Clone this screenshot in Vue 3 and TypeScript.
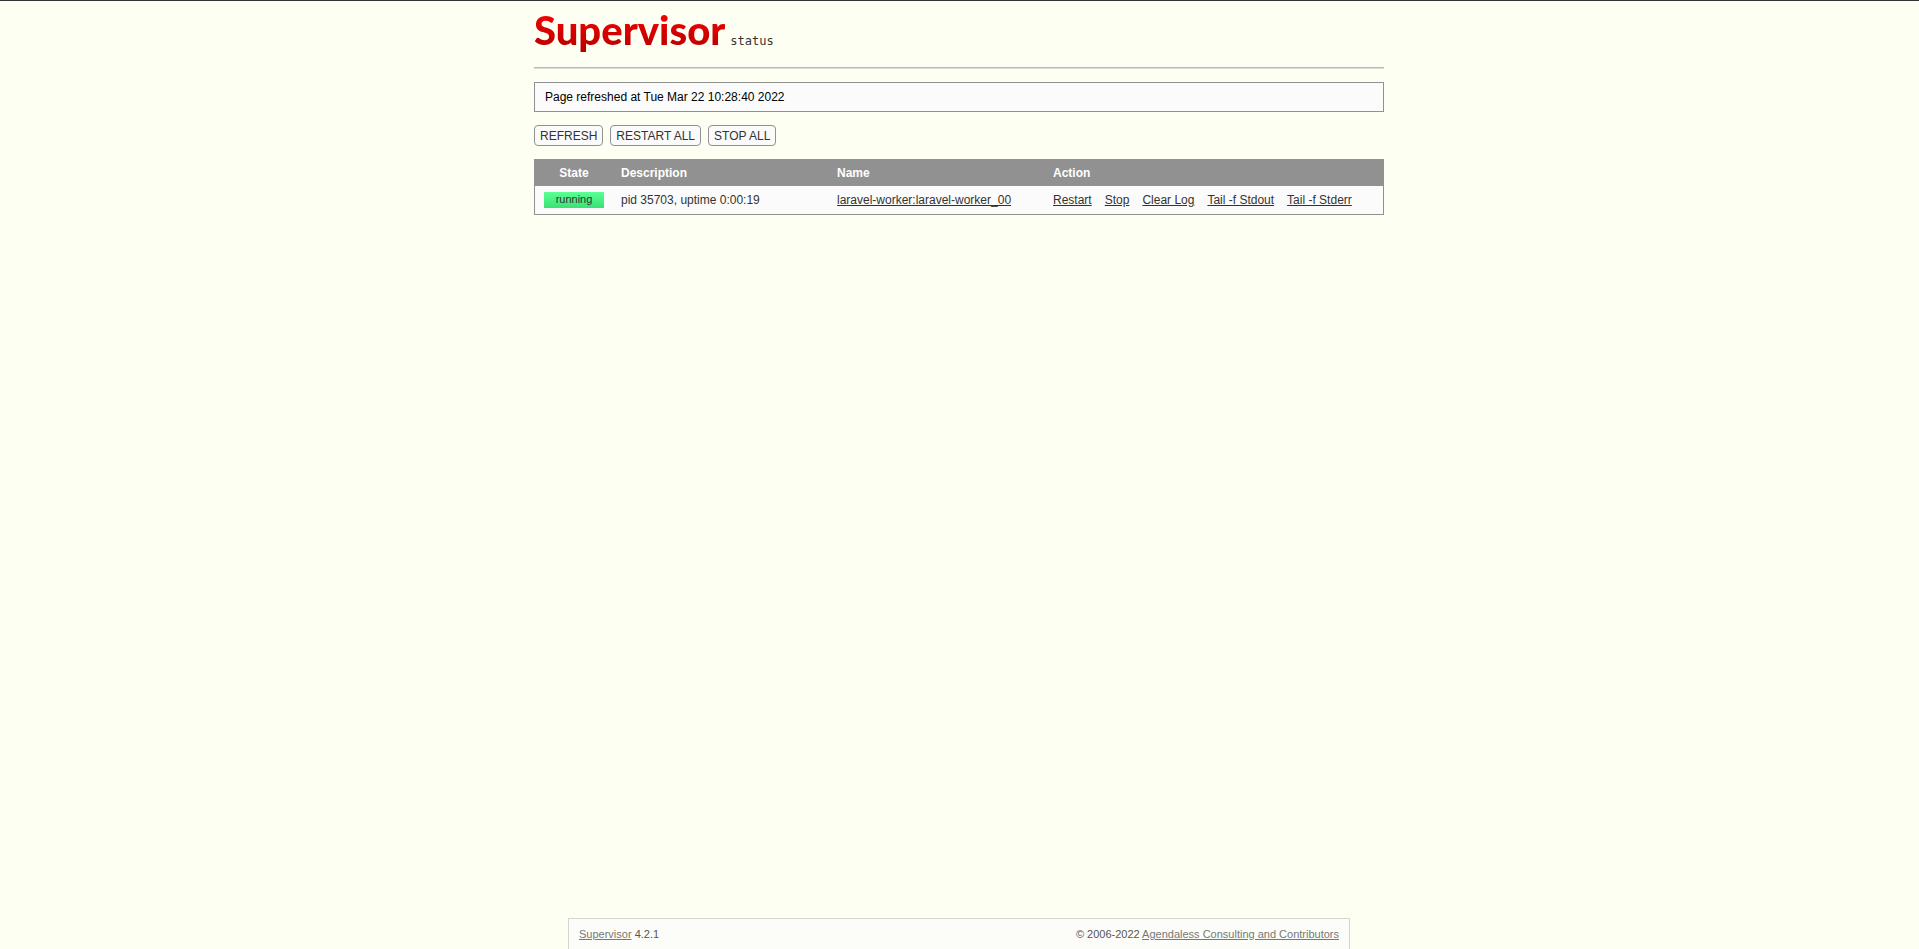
<script setup lang="ts">
interface Process {
  state: string
  description: string
  name: string
}

const message = 'Page refreshed at Tue Mar 22 10:28:40 2022'
const buttons: string[] = ['REFRESH', 'RESTART ALL', 'STOP ALL']
const actions: string[] = ['Restart', 'Stop', 'Clear Log', 'Tail -f Stdout', 'Tail -f Stderr']
const processes: Process[] = [
  {
    state: 'running',
    description: 'pid 35703, uptime 0:00:19',
    name: 'laravel-worker:laravel-worker_00',
  },
]
</script>

<template>
  <div class="page">
    <main class="wrapper">
      <header class="header">
        <h1 class="logo">Supervisor</h1>
        <span class="status">status</span>
      </header>

      <div class="message" role="status">{{ message }}</div>

      <div class="buttons">
        <button v-for="label in buttons" :key="label" type="button" class="button">{{ label }}</button>
      </div>

      <table class="processes">
        <colgroup>
          <col class="col-state" />
          <col class="col-text" />
          <col class="col-text" />
          <col />
        </colgroup>
        <thead>
          <tr>
            <th class="state" scope="col">State</th>
            <th scope="col">Description</th>
            <th scope="col">Name</th>
            <th scope="col">Action</th>
          </tr>
        </thead>
        <tbody>
          <tr v-for="process in processes" :key="process.name">
            <td class="state"><span class="badge">{{ process.state }}</span></td>
            <td>{{ process.description }}</td>
            <td><a href="#">{{ process.name }}</a></td>
            <td>
              <ul class="actions">
                <li v-for="action in actions" :key="action"><a href="#">{{ action }}</a></li>
              </ul>
            </td>
          </tr>
        </tbody>
      </table>
    </main>

    <footer class="footer">
      <div><a href="#">Supervisor</a> 4.2.1</div>
      <div>© 2006-2022 <a href="#">Agendaless Consulting and Contributors</a></div>
    </footer>
  </div>
</template>

<style>
body {
  background: #fefff3;
}
</style>

<style scoped>
.page {
  box-sizing: border-box;
  display: flex;
  flex-direction: column;
  align-items: center;
  min-height: 100vh;
  padding-right: 1px;
  border-top: 1px solid #333;
  color: #333;
  font: 12px/16px "Liberation Sans", Arial, sans-serif;
}

.wrapper {
  width: 100%;
  max-width: 850px;
  flex: 1;
}

.header {
  display: flex;
  align-items: baseline;
  gap: 5px;
  height: 66px;
  border-bottom: 1px solid #b9b9b9;
  box-shadow: 0 1px 0 #dcdcdc;
}

.logo {
  margin: 0;
  padding-top: 5px;
  background: linear-gradient(#f00000 30%, #b80000 90%);
  background-clip: text;
  color: transparent;
  font: 900 40px/48px Lato, sans-serif;
}

.status {
  color: #333;
  font: 12px/16px "DejaVu Sans Mono", monospace;
}

.message {
  margin-top: 14px;
  padding: 6px 10px;
  border: 1px solid #919191;
  background: #fbfbfb;
  color: #000;
}

.buttons {
  display: flex;
  gap: 7px;
  margin: 13px 0;
}

.button {
  padding: 2px 5px 1px;
  border: 1px solid #919191;
  border-radius: 4px;
  background: #fbfbfb;
  color: #333;
  font: inherit;
}

.processes {
  box-sizing: border-box;
  width: 100%;
  table-layout: fixed;
  border: 1px solid #919191;
  border-spacing: 0;
  background: #fbfbfb;
}

.col-state {
  width: 79px;
}

.col-text {
  width: 216px;
}

th,
td {
  padding: 6px 7px;
  text-align: left;
}

th {
  padding: 5px 7px;
  background: #919191;
  color: #fff;
}

.state {
  padding-right: 10px;
  padding-left: 9px;
  text-align: center;
}

.badge {
  display: block;
  padding-bottom: 2px;
  background: linear-gradient(#5bff94, #39e174);
  font-size: 11px;
  line-height: 14px;
}

.actions {
  display: flex;
  gap: 13px;
  margin: 0;
  padding: 0;
  list-style: none;
}

a {
  color: inherit;
}

.footer {
  box-sizing: border-box;
  display: flex;
  justify-content: space-between;
  width: 100%;
  max-width: 782px;
  padding: 7px 10px;
  border: 1px solid #d4d5ce;
  border-bottom: 0;
  background: #fcfdf8;
  color: #555;
  font-size: 11px;
}

.footer a {
  color: #777;
}
</style>
